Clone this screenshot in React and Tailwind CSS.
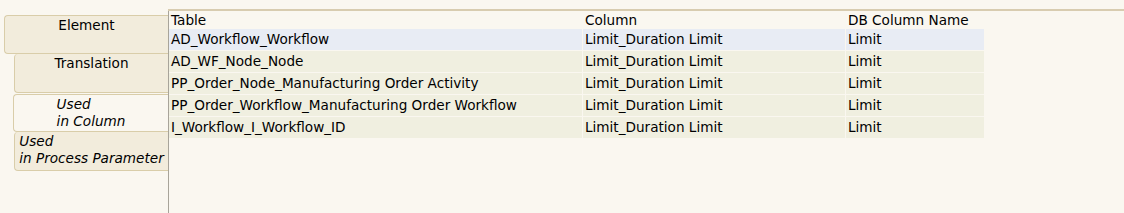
import React from "react";

const rows = [
  { table: "AD_Workflow_Workflow", column: "Limit_Duration Limit", db: "Limit", selected: true },
  { table: "AD_WF_Node_Node", column: "Limit_Duration Limit", db: "Limit" },
  { table: "PP_Order_Node_Manufacturing Order Activity", column: "Limit_Duration Limit", db: "Limit" },
  { table: "PP_Order_Workflow_Manufacturing Order Workflow", column: "Limit_Duration Limit", db: "Limit" },
  { table: "I_Workflow_I_Workflow_ID", column: "Limit_Duration Limit", db: "Limit" },
];

const App = () => {
  return (
    <div
      className="w-[1124px] h-[213px] bg-[#faf7f0] flex overflow-hidden text-[13.6px] text-black"
      style={{ fontFamily: '"DejaVu Sans", sans-serif' }}
    >
      {/* TABS */}
      <div className="w-[168px] shrink-0 pt-[15px] flex flex-col">
        <div className="ml-[4px] h-[39px] rounded-l-[4px] border border-r-0 border-[#d9cda9] bg-[#f2ecdc] text-center pt-[1px] leading-[17px]">
          Element
        </div>
        <div className="ml-[14px] h-[39px] rounded-l-[4px] border border-r-0 border-t-0 border-[#d9cda9] bg-[#f2ecdc] text-center pt-[1px] leading-[17px]">
          Translation
        </div>
        <div className="ml-[13px] mt-[1px] h-[38px] rounded-l-[4px] border border-r-0 border-[#d9cda9] bg-[#faf7f0] flex justify-center leading-[17px] italic">
          <div className="text-left pt-[1px]">
            Used
            <br />
            in Column
          </div>
        </div>
        <div className="ml-[14px] h-[39px] rounded-l-[4px] border border-r-0 border-t-0 border-[#d9cda9] bg-[#f2ecdc] flex justify-center leading-[17px] italic">
          <div className="text-left pt-[1px]">
            Used
            <br />
            in Process Parameter
          </div>
        </div>
      </div>

      {/* TABLE PANEL */}
      <div className="flex-1 mt-[9px] border-t-2 border-[#d8ccb0] flex">
        <div className="w-[1px] bg-[#a8a49a]" />
        <div className="flex-1 flex flex-col">
          <div className="flex h-[18px] leading-[18px]">
            <div className="w-[414px] pl-[2px]">Table</div>
            <div className="w-[263px] pl-[2px]">Column</div>
            <div className="w-[138px] pl-[2px] whitespace-nowrap">DB Column Name</div>
          </div>
          {rows.map((r) => (
            <div
              key={r.table}
              className={`flex w-[815px] h-[22px] leading-[21px] border-b border-[#faf7f0] ${
                r.selected ? "bg-[#e8ecf4]" : "bg-[#f0efe0]"
              }`}
            >
              <div className="w-[414px] pl-[2px] border-r border-[#faf7f0]">{r.table}</div>
              <div className="w-[263px] pl-[2px] border-r border-[#faf7f0]">{r.column}</div>
              <div className="w-[138px] pl-[2px]">{r.db}</div>
            </div>
          ))}
        </div>
      </div>
    </div>
  );
};

export default App;
